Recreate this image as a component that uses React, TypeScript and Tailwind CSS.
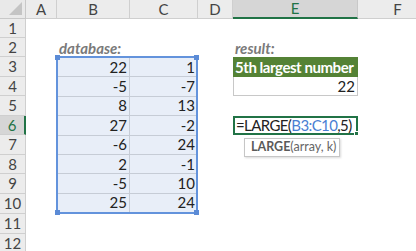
import React from 'react';

const cols = ['A', 'B', 'C', 'D', 'E', 'F'];
const data: [number, number][] = [
  [22, 1],
  [-5, -7],
  [8, 13],
  [27, -2],
  [-6, 24],
  [2, -1],
  [-5, 10],
  [25, 24],
];

const font = { fontFamily: 'Lato, "Liberation Sans", sans-serif' };

export default function App() {
  const rows = Array.from({ length: 12 }, (_, i) => i + 1);

  return (
    <div
      className="w-[416px] h-[251px] overflow-hidden bg-white text-[15px] text-[#222]"
      style={font}
    >
      <div className="grid grid-cols-[26px_31px_73px_68px_35px_125px_80px] grid-rows-[19px_19px_19px_20px_19px_20px_19px_20px_19px_20px_20px_20px_19px]">
        {/* corner */}
        <div className="col-start-1 row-start-1 bg-[#e9e9e9] border-r border-b border-[#c8c8c8] flex items-end justify-end p-[3px]">
          <div className="w-0 h-0 border-l-[13px] border-l-transparent border-b-[13px] border-b-[#c4c4c4]" />
        </div>

        {/* column headers */}
        {cols.map((c, i) => (
          <div
            key={c}
            className={
              c === 'E'
                ? 'row-start-1 bg-[#d6d6d6] border-r border-[#c8c8c8] border-b-2 border-b-[#217346] text-[#217346] flex items-center justify-center leading-none'
                : 'row-start-1 bg-[#ececec] border-r border-b border-[#cfcfcf] text-[#444] flex items-center justify-center leading-none'
            }
            style={{ gridColumnStart: i + 2 }}
          >
            {c}
          </div>
        ))}

        {/* row headers */}
        {rows.map((r) => (
          <div
            key={r}
            className={
              r === 6
                ? 'col-start-1 bg-[#d6d6d6] border-b border-[#cfcfcf] border-r-2 border-r-[#217346] text-[#217346] flex items-center justify-center leading-none'
                : 'col-start-1 bg-[#ececec] border-b border-r border-[#cfcfcf] text-[#444] flex items-center justify-center leading-none'
            }
            style={{ gridRowStart: r + 1 }}
          >
            {r}
          </div>
        ))}

        {/* labels */}
        <div className="col-start-3 col-span-2 row-start-3 flex items-end pl-[2px] pb-[1px] italic font-bold text-[#7a7a7a] leading-none">
          database:
        </div>
        <div className="col-start-6 row-start-3 flex items-end pl-[2px] pb-[1px] italic font-bold text-[#7a7a7a] leading-none">
          result:
        </div>

        {/* database table */}
        <div className="col-start-3 col-span-2 row-start-4 row-span-8 relative border-2 border-[#6393dc] bg-[#e8eef8] -mt-[1px] -ml-[1px] grid grid-cols-[72px_1fr]">
          {data.map(([b, c], i) => (
            <React.Fragment key={i}>
              <div
                className={`border-r border-[#c6ccd6] ${i < 7 ? 'border-b' : ''} flex items-center justify-end pr-[2px] leading-none`}
              >
                {b}
              </div>
              <div
                className={`${i < 7 ? 'border-b border-[#c6ccd6]' : ''} flex items-center justify-end pr-[1px] leading-none`}
              >
                {c}
              </div>
            </React.Fragment>
          ))}
          <div className="absolute -top-[3px] -left-[3px] w-[5px] h-[5px] bg-[#5b8bd6]" />
          <div className="absolute -top-[3px] -right-[3px] w-[5px] h-[5px] bg-[#5b8bd6]" />
          <div className="absolute -bottom-[3px] -left-[3px] w-[5px] h-[5px] bg-[#5b8bd6]" />
          <div className="absolute -bottom-[3px] -right-[3px] w-[5px] h-[5px] bg-[#5b8bd6]" />
        </div>

        {/* result */}
        <div className="col-start-6 row-start-4 bg-[#548235] text-white font-bold flex items-center pl-[2px] leading-none whitespace-nowrap tracking-[-0.45px]">
          5th largest number
        </div>
        <div className="col-start-6 row-start-5 border border-t-0 border-[#c8c8c8] flex items-center justify-end pr-[2px] leading-none">
          22
        </div>

        {/* formula cell */}
        <div className="col-start-6 row-start-7 relative border-2 border-[#217346] flex items-center pl-[1px] leading-none whitespace-nowrap tracking-[-0.6px]">
          <span>=LARGE(</span>
          <span className="text-[#4a7fd3]">B3:C10</span>
          <span>,5)</span>
          <div className="absolute -bottom-[3px] -right-[3px] w-[5px] h-[5px] bg-[#217346] border border-white" />
        </div>

        {/* tooltip */}
        <div className="col-start-6 row-start-8 relative">
          <div className="absolute left-[11px] top-[3px] h-[19px] w-[96px] bg-white border border-[#c6c6c6] shadow-[1px_1px_2px_rgba(0,0,0,0.15)] flex items-center pl-[6px] text-[12.5px] text-[#5a5a5a] leading-none whitespace-nowrap">
            <span className="font-bold">LARGE</span>
            <span className="text-[#666]">(array, k)</span>
          </div>
        </div>
      </div>
    </div>
  );
}
